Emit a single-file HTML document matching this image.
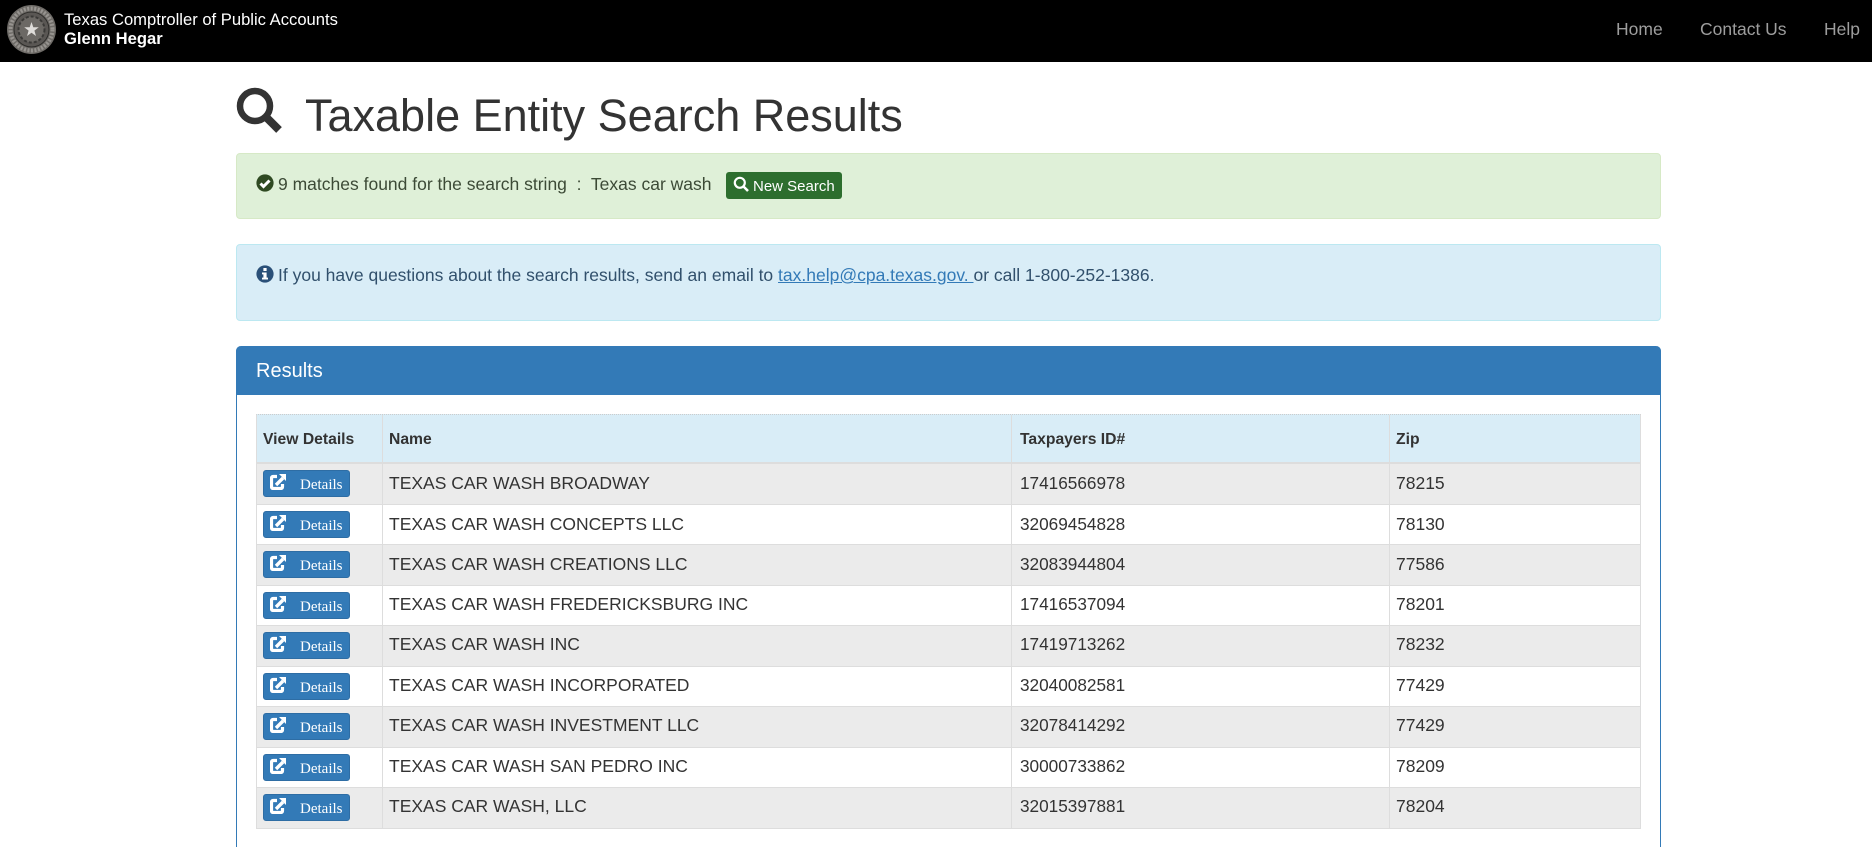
<!DOCTYPE html>
<html><head><meta charset="utf-8"><title>Taxable Entity Search Results</title>
<style>
*{box-sizing:border-box}
html,body{margin:0;padding:0;width:1872px;height:847px;overflow:hidden;background:#fff;font-family:"Liberation Sans",Arial,sans-serif;color:#333}
.a{position:absolute;white-space:nowrap}
nav{position:absolute;left:0;top:0;width:1872px;height:62px;background:#000}
.nl{color:#9d9d9d;font-size:17.5px;top:18px;line-height:22px}
.alert{position:absolute;left:236px;width:1425px;border-radius:4px;border:1px solid}
.panel{position:absolute;left:236px;top:346px;width:1425px;height:501px;border:1px solid #337ab7;border-top:0;border-bottom:0;border-radius:5px 5px 0 0}
.ph{position:absolute;left:-1px;top:0;width:1425px;height:49px;background:#337ab7;border-radius:5px 5px 0 0;color:#fff;font-size:20px;line-height:51px;padding-left:20px}
.row{position:absolute;left:256px;width:1385px;font-size:17.5px;margin-top:1px;border-bottom:1px solid #ddd;border-left:1px solid #ddd;border-right:1px solid #ddd}
.cell{position:absolute;top:0;line-height:38px;white-space:nowrap}
.t .cell{margin-top:-1px}
.n{font-size:17.2px}
.v{position:absolute;top:0;bottom:-1px;width:1px;background:#ddd}
.btn{position:absolute;left:6px;top:6px;width:87px;height:27px;background:#337ab7;border:1px solid #2e6da4;border-radius:3px;color:#fff;font-family:"Liberation Serif",serif;font-size:15px;line-height:29px;padding-left:36px}
.btn svg{position:absolute;left:6px;top:3px}
</style></head><body>
<nav>
<svg class="a" style="left:6px;top:4px" width="52" height="52" viewBox="0 0 52 52">
<circle cx="25.5" cy="25.5" r="24.5" fill="#6e6b67"/>
<circle cx="25.5" cy="25.5" r="21" fill="none" stroke="#979490" stroke-width="4" stroke-dasharray="2 1.5"/>
<circle cx="25.5" cy="25.5" r="17.5" fill="#5a5754" stroke="#2d2c2a" stroke-width="1"/>
<circle cx="25.5" cy="25.5" r="13" fill="#6c6965" stroke="#3a3937" stroke-width="2" stroke-dasharray="3 2"/>
<polygon points="25.5,18 27.3,23.2 32.8,23.2 28.4,26.6 30,32 25.5,28.7 21,32 22.6,26.6 18.2,23.2 23.7,23.2" fill="#dedcd9"/>
</svg>
<div class="a" style="left:64px;top:10px;color:#fff;font-size:16.6px;line-height:20px">Texas Comptroller of Public Accounts</div>
<div class="a" style="left:64px;top:29px;color:#fff;font-size:16.6px;line-height:20px;font-weight:bold">Glenn Hegar</div>
<div class="a nl" style="left:1616px">Home</div>
<div class="a nl" style="left:1700px">Contact Us</div>
<div class="a nl" style="left:1824px">Help</div>
</nav>

<svg class="a" style="left:236px;top:85px" width="50" height="50" viewBox="0 0 50 50">
<circle cx="19" cy="21" r="15" fill="none" stroke="#333" stroke-width="6.5"/>
<path d="M29 31L43 45" stroke="#333" stroke-width="8" fill="none"/>
</svg>
<div class="a" style="left:305px;top:89px;font-size:45px;line-height:54px;color:#333">Taxable Entity Search Results</div>

<div class="alert" style="top:153px;height:66px;background:#dff0d8;border-color:#d6e9c6"></div>
<svg class="a" style="left:256px;top:174px" width="18" height="18" viewBox="0 0 18 18">
<circle cx="9" cy="9" r="8.6" fill="#2f4a22"/>
<path d="M4.5 9.5L7.5 12.5L13.5 6.5" fill="none" stroke="#fff" stroke-width="3"/>
</svg>
<div class="a" style="left:278px;top:173px;font-size:17.5px;line-height:22px;color:#3c4a36;white-space:pre">9 matches found for the search string  :  Texas car wash</div>
<div class="a" style="left:726px;top:172px;width:116px;height:27px;background:#2d6e2e;border-radius:3px;color:#fff;font-size:15px;line-height:29px;padding-left:27px">New Search</div>
<svg class="a" style="left:733px;top:176px" width="17" height="17" viewBox="0 0 17 17">
<circle cx="6.8" cy="6.8" r="5" fill="none" stroke="#fff" stroke-width="2.2"/>
<path d="M10.5 10.5L15 15" stroke="#fff" stroke-width="2.6"/>
</svg>

<div class="alert" style="top:244px;height:77px;background:#d9edf7;border-color:#bce8f1"></div>
<svg class="a" style="left:256px;top:265px" width="18" height="18" viewBox="0 0 18 18">
<circle cx="9" cy="9" r="8.6" fill="#2a5078"/>
<rect x="7.4" y="3" width="3.2" height="3" fill="#fff"/>
<path d="M6 7.5H10.6V12.6H12V14.5H6V12.6H7.4V9.4H6Z" fill="#fff"/>
</svg>
<div class="a" style="left:278px;top:264px;font-size:17.5px;line-height:22px;color:#31506c">If you have questions about the search results, send an email to <span style="color:#337ab7;text-decoration:underline">tax.help@cpa.texas.gov. </span>or call 1-800-252-1386.</div>

<div class="panel"><div class="ph">Results</div></div>

<div class="row" style="top:413px;height:50px;background:#d9edf7;border-top:1px dotted #ccc;border-bottom:2px solid #ddd;font-weight:bold;font-size:15.7px">
<div class="cell" style="left:6px;line-height:49px">View Details</div><div class="cell" style="left:132px;line-height:49px">Name</div><div class="cell" style="left:763px;line-height:49px">Taxpayers ID#</div><div class="cell" style="left:1139px;line-height:49px">Zip</div>
<i class="v" style="left:125px"></i><i class="v" style="left:754px"></i><i class="v" style="left:1132px"></i>
</div>

<div class="row" style="top:463px;height:41px;background:#ebebeb"><div class="btn"><svg width="16" height="16" viewBox="0 0 16 16"><path d="M7 2.5H3.5Q1.5 2.5 1.5 4.5V12.5Q1.5 14.5 3.5 14.5H10.5Q12.5 14.5 12.5 12.5V10" fill="none" stroke="#fff" stroke-width="3.2"/><path d="M6 11L13 4" stroke="#fff" stroke-width="3.4"/><path d="M9 0H16V7Z" fill="#fff"/></svg>Details</div><div class="cell" style="left:132px">TEXAS CAR WASH BROADWAY</div><div class="cell n" style="left:763px">17416566978</div><div class="cell" style="left:1139px">78215</div><i class="v" style="left:125px"></i><i class="v" style="left:754px"></i><i class="v" style="left:1132px"></i></div>
<div class="row" style="top:504px;height:40px;background:#fff"><div class="btn"><svg width="16" height="16" viewBox="0 0 16 16"><path d="M7 2.5H3.5Q1.5 2.5 1.5 4.5V12.5Q1.5 14.5 3.5 14.5H10.5Q12.5 14.5 12.5 12.5V10" fill="none" stroke="#fff" stroke-width="3.2"/><path d="M6 11L13 4" stroke="#fff" stroke-width="3.4"/><path d="M9 0H16V7Z" fill="#fff"/></svg>Details</div><div class="cell" style="left:132px">TEXAS CAR WASH CONCEPTS LLC</div><div class="cell n" style="left:763px">32069454828</div><div class="cell" style="left:1139px">78130</div><i class="v" style="left:125px"></i><i class="v" style="left:754px"></i><i class="v" style="left:1132px"></i></div>
<div class="row" style="top:544px;height:41px;background:#ebebeb"><div class="btn"><svg width="16" height="16" viewBox="0 0 16 16"><path d="M7 2.5H3.5Q1.5 2.5 1.5 4.5V12.5Q1.5 14.5 3.5 14.5H10.5Q12.5 14.5 12.5 12.5V10" fill="none" stroke="#fff" stroke-width="3.2"/><path d="M6 11L13 4" stroke="#fff" stroke-width="3.4"/><path d="M9 0H16V7Z" fill="#fff"/></svg>Details</div><div class="cell" style="left:132px">TEXAS CAR WASH CREATIONS LLC</div><div class="cell n" style="left:763px">32083944804</div><div class="cell" style="left:1139px">77586</div><i class="v" style="left:125px"></i><i class="v" style="left:754px"></i><i class="v" style="left:1132px"></i></div>
<div class="row t" style="top:585px;height:40px;background:#fff"><div class="btn"><svg width="16" height="16" viewBox="0 0 16 16"><path d="M7 2.5H3.5Q1.5 2.5 1.5 4.5V12.5Q1.5 14.5 3.5 14.5H10.5Q12.5 14.5 12.5 12.5V10" fill="none" stroke="#fff" stroke-width="3.2"/><path d="M6 11L13 4" stroke="#fff" stroke-width="3.4"/><path d="M9 0H16V7Z" fill="#fff"/></svg>Details</div><div class="cell" style="left:132px">TEXAS CAR WASH FREDERICKSBURG INC</div><div class="cell n" style="left:763px">17416537094</div><div class="cell" style="left:1139px">78201</div><i class="v" style="left:125px"></i><i class="v" style="left:754px"></i><i class="v" style="left:1132px"></i></div>
<div class="row t" style="top:625px;height:41px;background:#ebebeb"><div class="btn"><svg width="16" height="16" viewBox="0 0 16 16"><path d="M7 2.5H3.5Q1.5 2.5 1.5 4.5V12.5Q1.5 14.5 3.5 14.5H10.5Q12.5 14.5 12.5 12.5V10" fill="none" stroke="#fff" stroke-width="3.2"/><path d="M6 11L13 4" stroke="#fff" stroke-width="3.4"/><path d="M9 0H16V7Z" fill="#fff"/></svg>Details</div><div class="cell" style="left:132px">TEXAS CAR WASH INC</div><div class="cell n" style="left:763px">17419713262</div><div class="cell" style="left:1139px">78232</div><i class="v" style="left:125px"></i><i class="v" style="left:754px"></i><i class="v" style="left:1132px"></i></div>
<div class="row t" style="top:666px;height:40px;background:#fff"><div class="btn"><svg width="16" height="16" viewBox="0 0 16 16"><path d="M7 2.5H3.5Q1.5 2.5 1.5 4.5V12.5Q1.5 14.5 3.5 14.5H10.5Q12.5 14.5 12.5 12.5V10" fill="none" stroke="#fff" stroke-width="3.2"/><path d="M6 11L13 4" stroke="#fff" stroke-width="3.4"/><path d="M9 0H16V7Z" fill="#fff"/></svg>Details</div><div class="cell" style="left:132px">TEXAS CAR WASH INCORPORATED</div><div class="cell n" style="left:763px">32040082581</div><div class="cell" style="left:1139px">77429</div><i class="v" style="left:125px"></i><i class="v" style="left:754px"></i><i class="v" style="left:1132px"></i></div>
<div class="row t" style="top:706px;height:41px;background:#ebebeb"><div class="btn"><svg width="16" height="16" viewBox="0 0 16 16"><path d="M7 2.5H3.5Q1.5 2.5 1.5 4.5V12.5Q1.5 14.5 3.5 14.5H10.5Q12.5 14.5 12.5 12.5V10" fill="none" stroke="#fff" stroke-width="3.2"/><path d="M6 11L13 4" stroke="#fff" stroke-width="3.4"/><path d="M9 0H16V7Z" fill="#fff"/></svg>Details</div><div class="cell" style="left:132px">TEXAS CAR WASH INVESTMENT LLC</div><div class="cell n" style="left:763px">32078414292</div><div class="cell" style="left:1139px">77429</div><i class="v" style="left:125px"></i><i class="v" style="left:754px"></i><i class="v" style="left:1132px"></i></div>
<div class="row t" style="top:747px;height:40px;background:#fff"><div class="btn"><svg width="16" height="16" viewBox="0 0 16 16"><path d="M7 2.5H3.5Q1.5 2.5 1.5 4.5V12.5Q1.5 14.5 3.5 14.5H10.5Q12.5 14.5 12.5 12.5V10" fill="none" stroke="#fff" stroke-width="3.2"/><path d="M6 11L13 4" stroke="#fff" stroke-width="3.4"/><path d="M9 0H16V7Z" fill="#fff"/></svg>Details</div><div class="cell" style="left:132px">TEXAS CAR WASH SAN PEDRO INC</div><div class="cell n" style="left:763px">30000733862</div><div class="cell" style="left:1139px">78209</div><i class="v" style="left:125px"></i><i class="v" style="left:754px"></i><i class="v" style="left:1132px"></i></div>
<div class="row t" style="top:787px;height:41px;background:#ebebeb"><div class="btn"><svg width="16" height="16" viewBox="0 0 16 16"><path d="M7 2.5H3.5Q1.5 2.5 1.5 4.5V12.5Q1.5 14.5 3.5 14.5H10.5Q12.5 14.5 12.5 12.5V10" fill="none" stroke="#fff" stroke-width="3.2"/><path d="M6 11L13 4" stroke="#fff" stroke-width="3.4"/><path d="M9 0H16V7Z" fill="#fff"/></svg>Details</div><div class="cell" style="left:132px">TEXAS CAR WASH, LLC</div><div class="cell n" style="left:763px">32015397881</div><div class="cell" style="left:1139px">78204</div><i class="v" style="left:125px"></i><i class="v" style="left:754px"></i><i class="v" style="left:1132px"></i></div>
</body></html>
